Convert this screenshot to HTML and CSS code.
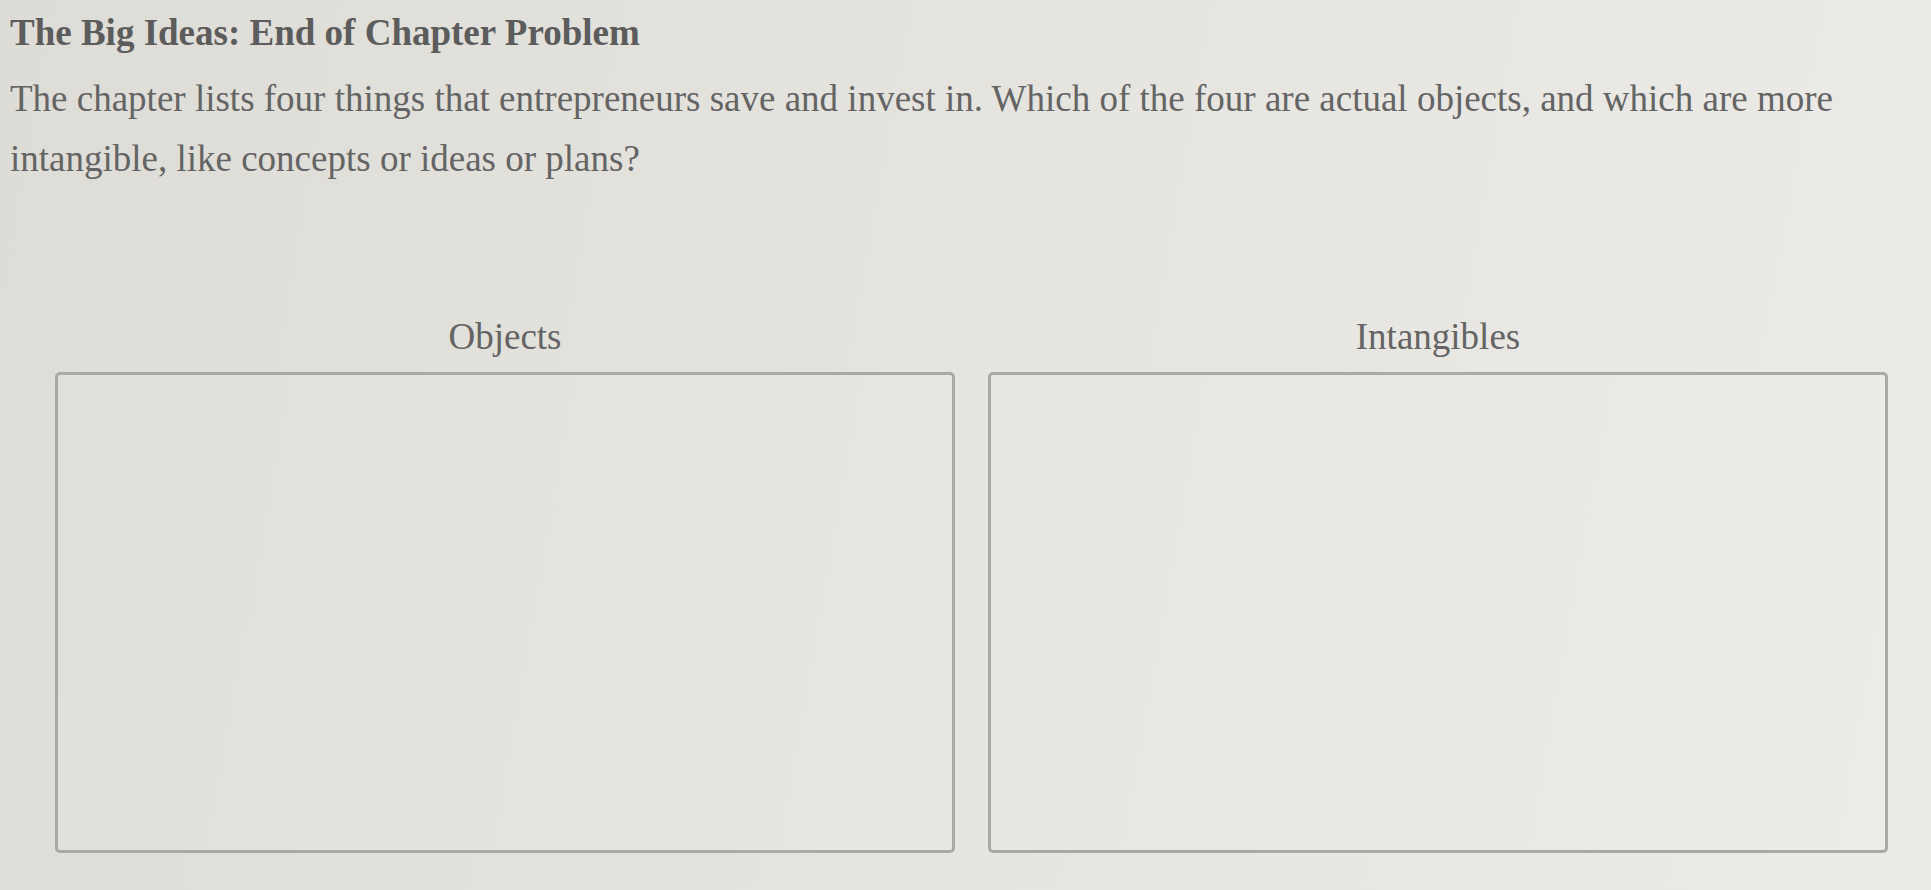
FILE: index.html
```html
<!DOCTYPE html>
<html lang="en">
<head>
<meta charset="utf-8">
<title>The Big Ideas: End of Chapter Problem</title>
<link rel="stylesheet" href="styles.css">
</head>
<body>
<main class="page">
  <h1 class="title">The Big Ideas: End of Chapter Problem</h1>
  <p class="prompt">The chapter lists four things that entrepreneurs save and invest in. Which of the four are actual objects, and which are more intangible, like concepts or ideas or plans?</p>
  <section class="columns">
    <div class="column">
      <div class="label">Objects</div>
      <div class="dropbox"></div>
    </div>
    <div class="column">
      <div class="label">Intangibles</div>
      <div class="dropbox"></div>
    </div>
  </section>
</main>
</body>
</html>
```
FILE: styles.css
```css
html, body {
  margin: 0;
  padding: 0;
  height: 100%;
}
body {
  background: linear-gradient(100deg, #dedcd6 0%, #e5e3de 45%, #ecebe7 100%);
  font-family: "Liberation Serif", "Times New Roman", serif;
  color: #646464;
}
.page {
  padding: 12px 43px 0 10px;
}
.title {
  margin: 0;
  font-size: 37px;
  line-height: 42px;
  font-weight: bold;
  color: #5c5c5c;
}
.prompt {
  margin: 15px 0 0 0;
  font-size: 37px;
  line-height: 60px;
  color: #646464;
}
.columns {
  margin: 127px 0 0 45px;
  display: grid;
  grid-template-columns: 1fr 1fr;
  column-gap: 33px;
}
.column {
  display: flex;
  flex-direction: column;
  align-items: stretch;
}
.label {
  text-align: center;
  font-size: 37px;
  line-height: 42px;
  color: #646464;
}
.dropbox {
  margin-top: 14px;
  height: 475px;
  border: 3px solid #a9a9a7;
  border-radius: 5px;
  background: rgba(255, 255, 255, 0.08);
}
```
